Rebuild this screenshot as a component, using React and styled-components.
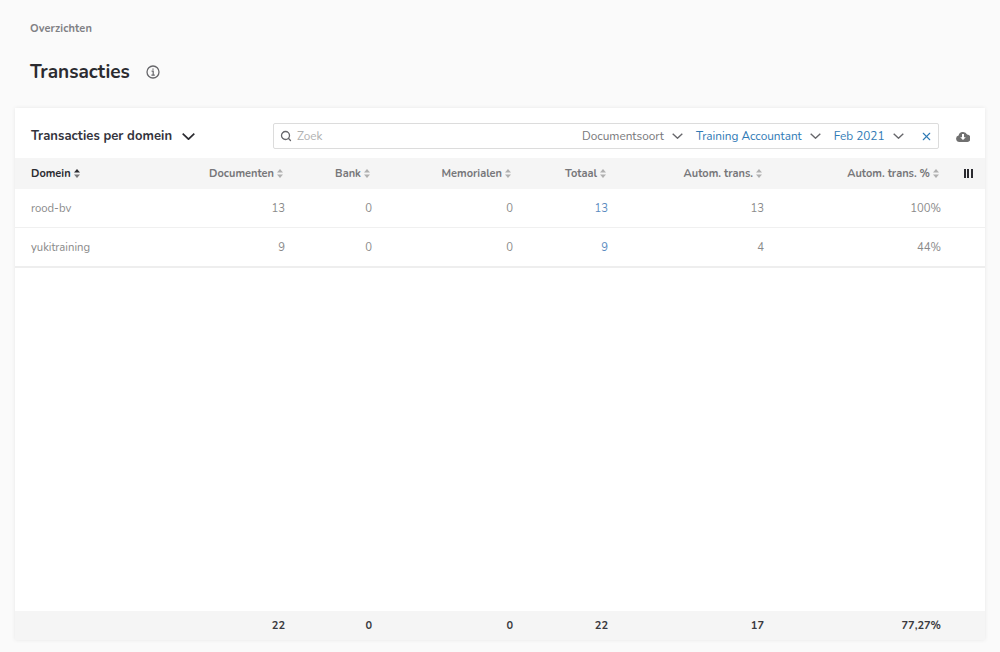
import styled, { createGlobalStyle } from 'styled-components';
import { Search, X } from 'lucide-react';

const GlobalStyle = createGlobalStyle`
  html, body {
    margin: 0;
    background: #fafafa;
    font-family: "Nunito", "Noto Sans", "Open Sans", sans-serif;
  }
`;

const Page = styled.div`
  display: flex;
  flex-direction: column;
  width: 1000px;
  height: 652px;
  padding: 0 15px;
  box-sizing: border-box;
  overflow: hidden;
`;

const Breadcrumb = styled.div`
  margin: 21px 0 0 15px;
  font-size: 11px;
  line-height: 15px;
  font-weight: 700;
  letter-spacing: 0.1px;
  color: #808084;
`;

const TitleRow = styled.div`
  display: flex;
  align-items: center;
  gap: 16px;
  height: 28px;
  margin: 22px 0 22px 15px;
`;

const Title = styled.h1`
  margin: 0;
  font-size: 19px;
  font-weight: 700;
  color: #2b2b30;
`;

const Card = styled.section`
  display: flex;
  flex-direction: column;
  height: 532px;
  background: #fff;
  box-shadow: 0 0 4px rgba(0, 0, 0, 0.08);
`;

const Toolbar = styled.div`
  display: flex;
  align-items: center;
  height: 50px;
  padding: 6px 15px 0 16px;
  box-sizing: border-box;
`;

const ViewSelect = styled.div`
  display: flex;
  align-items: center;
  gap: 10px;
  width: 242px;
  font-size: 13px;
  font-weight: 700;
  letter-spacing: 0.05px;
  color: #33333c;
`;

const SearchBox = styled.div`
  display: flex;
  align-items: center;
  width: 666px;
  height: 26px;
  box-sizing: border-box;
  padding: 0 5.5px 0 6px;
  border: 1px solid #dcdcdc;
  border-radius: 2px;
  font-size: 11.8px;
`;

const Placeholder = styled.span`
  flex: 1;
  margin-left: 5px;
  color: #b0b0b0;
`;

const Filter = styled.span`
  display: flex;
  align-items: center;
  gap: 8px;
  margin-right: 13px;
  color: ${(p) => (p.$active ? '#2f7ab5' : '#77777a')};
`;

const ClearIcon = styled(X)`
  margin-left: 3px;
  color: #2f7ab5;
`;

const Download = styled.svg`
  margin-left: auto;
  color: #707070;
`;

const Row = styled.div`
  display: grid;
  grid-template-columns: 130px 124px 87px 141px 95px 156px 177px 44px;
  align-items: center;
  padding-left: 16px;
  font-size: 11.3px;
  color: #8a8a8a;
`;

const HeaderRow = styled(Row)`
  height: 31px;
  background: #f5f5f5;
  font-size: 11px;
  font-weight: 700;
  color: #77777a;
`;

const BodyRow = styled(Row)`
  height: ${(p) => (p.$last ? '40px' : '39px')};
  box-sizing: border-box;
  border-bottom: ${(p) => (p.$last ? '2px solid #eeeeee' : '1px solid #f0f0f0')};
`;

const FooterRow = styled(Row)`
  height: 29px;
  margin-top: auto;
  background: #f5f5f5;
  font-size: 11px;
  font-weight: 700;
  color: #3a3a40;
`;

const HeaderCell = styled.div`
  display: flex;
  align-items: center;
  justify-content: ${(p) => (p.$left ? 'flex-start' : 'flex-end')};
  gap: 3px;
  padding-right: 2px;
  color: ${(p) => (p.$left ? '#2b2b30' : 'inherit')};
`;

const Cell = styled.div`
  text-align: ${(p) => (p.$left ? 'left' : 'right')};
  color: ${(p) => (p.$link ? '#5b8bc0' : 'inherit')};
`;

const ColumnsIcon = styled.div`
  display: flex;
  justify-content: center;
  gap: 1.5px;
  padding-left: 10px;
  span {
    width: 2px;
    height: 9px;
    background: #2b2b30;
  }
`;

function Chevron({ width = 11, color = '#66666a', strokeWidth = 1.4 }) {
  const height = Math.round(width * 0.55);
  return (
    <svg width={width} height={height} viewBox={`0 0 ${width} ${height}`} fill="none">
      <path
        d={`M0.7 0.7 ${width / 2} ${height - 0.8} ${width - 0.7} 0.7`}
        stroke={color}
        strokeWidth={strokeWidth}
      />
    </svg>
  );
}

function SortIcon({ active }) {
  return (
    <svg width="6" height="9" viewBox="0 0 6 9">
      <path d="M3 0 6 3.6H0z" fill={active ? '#2b2b30' : '#b0b0b0'} />
      <path d="M3 9 0 5.4h6z" fill={active ? '#77777a' : '#b0b0b0'} />
    </svg>
  );
}

function InfoIcon() {
  return (
    <svg width="14" height="14" viewBox="0 0 14 14" fill="none" stroke="#66666a">
      <circle cx="7" cy="7" r="6" strokeWidth="1.3" />
      <path d="M5.6 6.2H7.2V10M5.4 10.2H8.8" strokeWidth="1.2" />
      <path d="M6.4 3.4h1.2v1.3H6.4z" fill="#66666a" stroke="none" />
    </svg>
  );
}

const columns = ['Documenten', 'Bank', 'Memorialen', 'Totaal', 'Autom. trans.', 'Autom. trans. %'];

const rows = [
  { name: 'rood-bv', docs: 13, bank: 0, memo: 0, total: 13, auto: 13, pct: '100%' },
  { name: 'yukitraining', docs: 9, bank: 0, memo: 0, total: 9, auto: 4, pct: '44%' },
];

export default function App() {
  return (
    <Page>
      <GlobalStyle />
      <Breadcrumb>Overzichten</Breadcrumb>
      <TitleRow>
        <Title>Transacties</Title>
        <InfoIcon />
      </TitleRow>
      <Card>
        <Toolbar>
          <ViewSelect>
            Transacties per domein
            <Chevron width={13} color="#2b2b30" strokeWidth={1.7} />
          </ViewSelect>
          <SearchBox>
            <Search size={12} strokeWidth={2.6} color="#66666a" />
            <Placeholder>Zoek</Placeholder>
            <Filter>Documentsoort <Chevron /></Filter>
            <Filter $active>Training Accountant <Chevron /></Filter>
            <Filter $active>Feb 2021 <Chevron /></Filter>
            <ClearIcon size={13} strokeWidth={2} />
          </SearchBox>
          <Download width="14" height="11" viewBox="0 0 14 11">
            <path
              fill="currentColor"
              fillRule="evenodd"
              d="M3.4 11A3.3 3.3 0 0 1 2.6 4.5 4.5 4.5 0 0 1 11.1 3.6 3.7 3.7 0 0 1 10.6 11ZM6 3v3.2H4.2L7 9l2.8-2.8H8V3Z"
            />
          </Download>
        </Toolbar>
        <HeaderRow>
          <HeaderCell $left>Domein <SortIcon active /></HeaderCell>
          {columns.map((label) => (
            <HeaderCell key={label}>
              {label}
              <SortIcon />
            </HeaderCell>
          ))}
          <ColumnsIcon><span /><span /><span /></ColumnsIcon>
        </HeaderRow>
        {rows.map((row, i) => (
          <BodyRow key={row.name} $last={i === rows.length - 1}>
            <Cell $left>{row.name}</Cell>
            <Cell>{row.docs}</Cell>
            <Cell>{row.bank}</Cell>
            <Cell>{row.memo}</Cell>
            <Cell $link>{row.total}</Cell>
            <Cell>{row.auto}</Cell>
            <Cell>{row.pct}</Cell>
          </BodyRow>
        ))}
        <FooterRow>
          <span />
          <Cell>22</Cell>
          <Cell>0</Cell>
          <Cell>0</Cell>
          <Cell>22</Cell>
          <Cell>17</Cell>
          <Cell>77,27%</Cell>
        </FooterRow>
      </Card>
    </Page>
  );
}
